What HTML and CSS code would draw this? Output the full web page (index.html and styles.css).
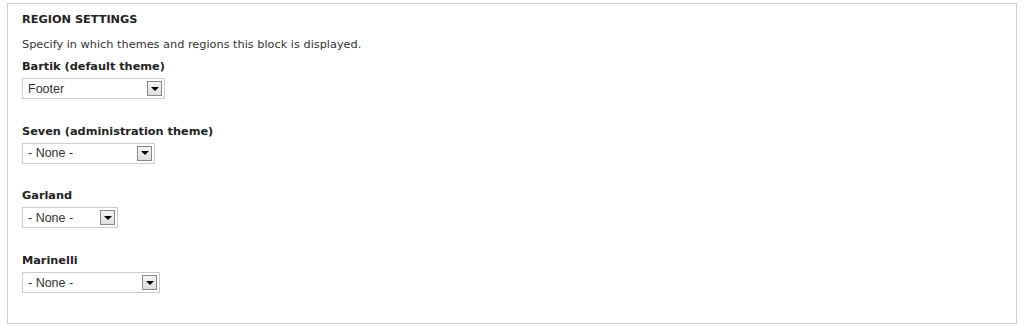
FILE: index.html
```html
<!DOCTYPE html>
<html>
<head>
<meta charset="utf-8">
<link rel="stylesheet" href="styles.css">
</head>
<body>
<div class="fieldset">
  <div class="legend">REGION SETTINGS</div>
  <div class="desc">Specify in which themes and regions this block is displayed.</div>
  <div class="item">
    <div class="label">Bartik (default theme)</div>
    <div class="select w-bartik"><span class="value">Footer</span><span class="btn"><span class="tri"></span></span></div>
  </div>
  <div class="item">
    <div class="label">Seven (administration theme)</div>
    <div class="select w-seven"><span class="value">- None -</span><span class="btn"><span class="tri"></span></span></div>
  </div>
  <div class="item">
    <div class="label">Garland</div>
    <div class="select w-garland"><span class="value">- None -</span><span class="btn"><span class="tri"></span></span></div>
  </div>
  <div class="item">
    <div class="label">Marinelli</div>
    <div class="select w-marinelli"><span class="value">- None -</span><span class="btn"><span class="tri"></span></span></div>
  </div>
</div>
</body>
</html>
```
FILE: styles.css
```css
html, body { margin: 0; padding: 0; background: #fff; }
body { font-family: "DejaVu Sans", Verdana, sans-serif; color: #333; }
.fieldset {
  margin: 3px 0 0 7px;
  border: 1px solid #ccc;
  padding: 9px 0 0 14px;
  box-sizing: border-box;
  width: 1010px;
  height: 321px;
}
.legend { font-size: 11.3px; font-weight: bold; color: #222; line-height: 14px; }
.desc { font-size: 11.3px; line-height: 14px; margin-top: 11px; color: #333; }
.item { margin-top: 8px; }
.item + .item { margin-top: 25.7px; }
.label { font-size: 11.3px; font-weight: bold; color: #222; line-height: 14px; margin-bottom: 4px; }
.select {
  display: flex; align-items: center; justify-content: space-between;
  height: 21px; box-sizing: border-box;
  border: 1px solid #ccc; background: #fff;
  padding: 0 2px 0 5px;
  font-family: "Liberation Sans", Arial, sans-serif; font-size: 12.5px; color: #333;
}
.w-bartik { width: 143px; }
.w-seven { width: 133px; }
.w-garland { width: 96px; }
.w-marinelli { width: 138px; }
.btn {
  width: 15px; height: 15px; box-sizing: border-box;
  border: 1px solid #888; background: linear-gradient(#f4f4f4, #dedede);
  display: flex; align-items: center; justify-content: center;
}
.tri { width: 0; height: 0; border-left: 4px solid transparent; border-right: 4px solid transparent; border-top: 4px solid #000; }
```
